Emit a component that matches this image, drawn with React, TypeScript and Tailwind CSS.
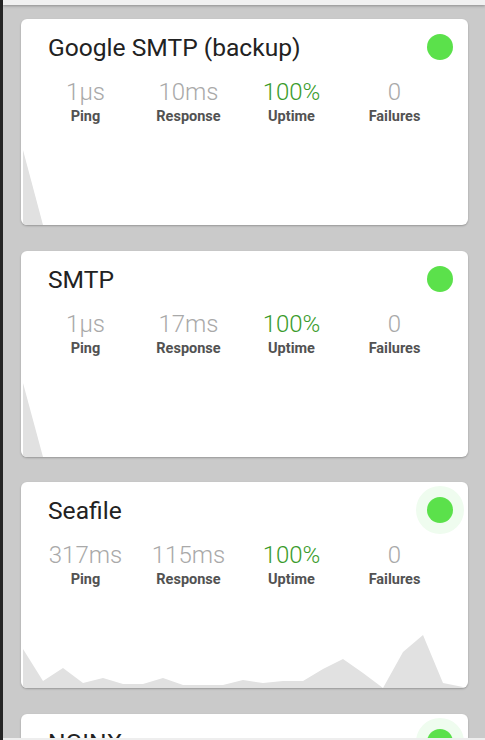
import React from "react";

type Monitor = {
  name: string;
  ping?: string;
  response?: string;
  uptime?: string;
  failures?: string;
  halo?: boolean;
  chart?: string;
};

const monitors: Monitor[] = [
  {
    name: "Google SMTP (backup)",
    ping: "1µs",
    response: "10ms",
    uptime: "100%",
    failures: "0",
    chart: "2,80 2,5 22,80",
  },
  {
    name: "SMTP",
    ping: "1µs",
    response: "17ms",
    uptime: "100%",
    failures: "0",
    chart: "2,80 2,6 22,80",
  },
  {
    name: "Seafile",
    ping: "317ms",
    response: "115ms",
    uptime: "100%",
    failures: "0",
    halo: true,
    chart:
      "2,80 2,41 22,73 42,60 62,75 82,70 102,76 122,76 142,70 162,77 182,77 202,77 222,72 242,75 262,73 282,73 302,61 322,51 342,65 362,80 382,44 402,27 422,75 442,79 447,80",
  },
  // only the top of this one is on screen
  { name: "NGINX", halo: true },
];

function Stat({ value, label, green }: { value: string; label: string; green?: boolean }) {
  return (
    <div className="w-[103px] flex flex-col items-center">
      <span
        className={`text-[24px] leading-[28px] font-light ${
          green ? "text-[#3a9b2b]" : "text-[#a9a9a9]"
        }`}
      >
        {value}
      </span>
      <span className="mt-[3px] text-[14.5px] leading-[16px] font-bold text-[#525252]">{label}</span>
    </div>
  );
}

function MonitorCard({ m }: { m: Monitor }) {
  return (
    <div className="w-[447px] h-[206px] shrink-0 bg-white rounded-[6px] shadow-[0_1px_2px_rgba(0,0,0,0.25)] overflow-hidden flex flex-col">
      <div className="pt-[14px] pl-[27px] pr-[15px] flex items-center justify-between">
        <span className="text-[24.6px] leading-[28px] text-[#222] translate-y-[1px]">{m.name}</span>
        <span
          className={`w-[26px] h-[26px] rounded-full bg-[#5be14b] ${
            m.halo ? "shadow-[0_0_0_11px_#effcef]" : ""
          }`}
        />
      </div>
      {m.ping !== undefined && (
        <>
          <div className="mt-[17px] pl-[13px] flex">
            <Stat value={m.ping} label="Ping" />
            <Stat value={m.response ?? ""} label="Response" />
            <Stat value={m.uptime ?? ""} label="Uptime" green />
            <Stat value={m.failures ?? ""} label="Failures" />
          </div>
          <svg className="mt-auto block" width="447" height="80" viewBox="0 0 447 80">
            {m.chart && <polygon points={m.chart} fill="#e1e1e1" />}
          </svg>
        </>
      )}
    </div>
  );
}

export default function App() {
  return (
    <div
      className="flex w-[485px] h-[740px] overflow-hidden"
      style={{ fontFamily: "Roboto, 'Liberation Sans', sans-serif" }}
    >
      <div className="w-[3px] shrink-0 bg-[#252525]" />
      <div className="flex-1 flex flex-col bg-[#cacaca]">
        <div className="h-[5px] shrink-0 bg-[#f1f1f1] shadow-[0_1px_3px_rgba(0,0,0,0.3)] relative z-10" />
        <div className="flex-1 overflow-hidden pl-[18px] pt-[14px] flex flex-col gap-[25.6px]">
          {monitors.map((m) => (
            <MonitorCard key={m.name} m={m} />
          ))}
        </div>
        <div className="h-[2px] shrink-0 bg-[#eeeeee]" />
      </div>
    </div>
  );
}
